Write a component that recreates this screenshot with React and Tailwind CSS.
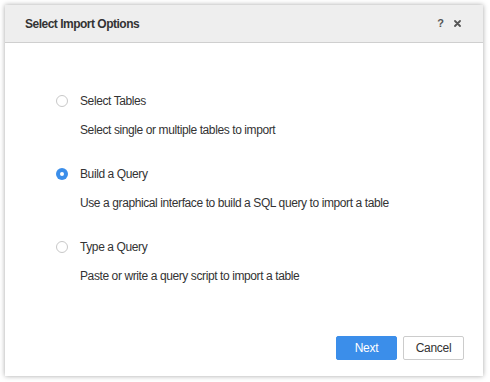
import React, { useState } from "react";

const options = [
  { id: "tables", label: "Select Tables", desc: "Select single or multiple tables to import" },
  { id: "build", label: "Build a Query", desc: "Use a graphical interface to build a SQL query to import a table" },
  { id: "type", label: "Type a Query", desc: "Paste or write a query script to import a table" },
];

function Radio({ checked }) {
  return checked ? (
    <span className="w-[12px] h-[12px] rounded-full bg-[#3b8eea] flex items-center justify-center shrink-0">
      <span className="w-[4px] h-[4px] rounded-full bg-white" />
    </span>
  ) : (
    <span className="w-[12px] h-[12px] rounded-full border border-[#c8c8c8] bg-white shrink-0" />
  );
}

export default function App() {
  const [sel, setSel] = useState("build");
  return (
    <div
      className="w-[490px] h-[382px] bg-white pt-[5px] pl-[5px]"
      style={{ fontFamily: '"Liberation Sans", Arial, sans-serif' }}
    >
      <div className="w-[478px] h-[371px] bg-white flex flex-col shadow-[0_0_5px_rgba(0,0,0,0.35)]">
        <div className="h-[38px] bg-[#eeeeee] border-b border-[#cfcfcf] flex items-center pl-[20px] pr-[22px] shrink-0">
          <span className="text-[12px] font-bold text-[#333333] tracking-[-0.5px]">Select Import Options</span>
          <div className="ml-auto flex items-center gap-[10px] text-[#555555]">
            <span className="text-[11px] font-bold">?</span>
            <svg width="7" height="7" viewBox="0 0 7 7">
              <path d="M1 1L6 6M6 1L1 6" stroke="#555" strokeWidth="1.8" strokeLinecap="round" />
            </svg>
          </div>
        </div>
        <div className="flex flex-col pl-[51px] pt-[50px] gap-[28px]">
          {options.map((o) => (
            <div key={o.id} className="flex flex-col gap-[13px] cursor-pointer" onClick={() => setSel(o.id)}>
              <div className="flex items-center h-[16px] gap-[12px]">
                <Radio checked={sel === o.id} />
                <span className="text-[12px] text-[#333333] leading-[16px] tracking-[-0.4px]">{o.label}</span>
              </div>
              <div className="pl-[24px] text-[12px] text-[#333333] leading-[16px] tracking-[-0.4px]">{o.desc}</div>
            </div>
          ))}
        </div>
        <div className="mt-auto flex justify-end gap-[6px] pr-[19px] pb-[16px]">
          <button className="w-[61px] h-[24px] bg-[#3b8eea] text-white text-[12px] tracking-[-0.3px] rounded-[2px] border border-[#3b8eea]">
            Next
          </button>
          <button className="w-[61px] h-[24px] bg-white text-[#333333] text-[12px] tracking-[-0.3px] rounded-[2px] border border-[#cccccc]">
            Cancel
          </button>
        </div>
      </div>
    </div>
  );
}
